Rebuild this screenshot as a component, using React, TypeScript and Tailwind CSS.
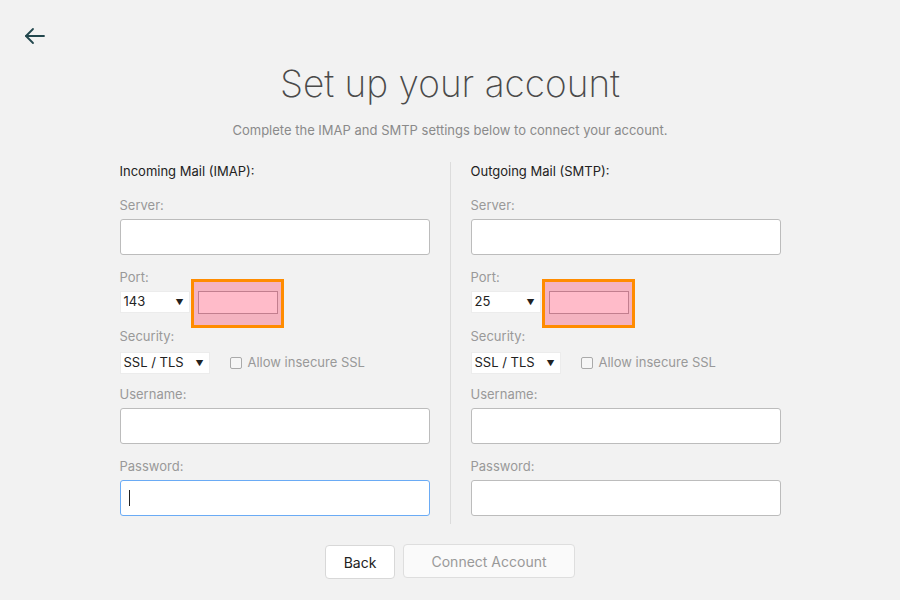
import React from 'react';

function BackArrow() {
  return (
    <svg width="22" height="18" viewBox="0 0 22 18" fill="none" stroke="#22474d" strokeWidth="1.8" strokeLinecap="round" strokeLinejoin="round">
      <path d="M2 9h18" />
      <path d="M9 2L2 9l7 7" />
    </svg>
  );
}

function Label({ children, className = '' }: { children: React.ReactNode; className?: string }) {
  return <div className={`text-[13px] leading-4 text-[#999] ${className}`}>{children}</div>;
}

function TextBox({ focused = false }: { focused?: boolean }) {
  return (
    <div
      className={`h-9 w-full rounded-[3px] bg-white border flex items-center px-2 ${
        focused ? 'border-[#6aabf5]' : 'border-[#bcbcbc]'
      }`}
    >
      {focused && <span className="w-px h-4 bg-[#222]" />}
    </div>
  );
}

function Select({ value, width }: { value: string; width: string }) {
  return (
    <div className={`${width} h-[22px] bg-white border border-[#ececec] flex items-center justify-between pl-[3px] pr-[5px] text-[13px] text-[#222]`}>
      <span>{value}</span>
      <span className="text-[8px] text-[#222]">▼</span>
    </div>
  );
}

function Column({ title, port }: { title: string; port: string }) {
  return (
    <div className="w-[310px] pb-2">
      <div className="text-[13px] leading-4 text-[#222] mt-px">{title}</div>
      <Label className="mt-[18px]">Server:</Label>
      <div className="mt-[6px]">
        <TextBox />
      </div>
      <Label className="mt-[14px]">Port:</Label>
      <div className="mt-[6px] flex items-start">
        <Select value={port} width="w-[70px]" />
        <div className="relative ml-2">
          <div className="absolute left-[-7px] top-[-12px] w-[93px] h-[49px] border-[3px] border-[#ff8c00] bg-[#f4b3c0]" />
          <div className="relative w-[80px] h-[23px] bg-[#ffbbc9] border border-[#c27e8e]" />
        </div>
      </div>
      <Label className="mt-[14px]">Security:</Label>
      <div className="mt-[8px] flex items-center">
        <Select value="SSL / TLS" width="w-[90px]" />
        <div className="ml-5 flex items-center gap-[6px]">
          <span className="w-3 h-3 rounded-[2px] border border-[#aaa] bg-[#f6f6f6]" />
          <span className="text-[13px] text-[#999]">Allow insecure SSL</span>
        </div>
      </div>
      <Label className="mt-[12px]">Username:</Label>
      <div className="mt-[6px]">
        <TextBox />
      </div>
      <Label className="mt-[14px]">Password:</Label>
      <div className="mt-[6px]">
        <TextBox focused={title.startsWith('Incoming')} />
      </div>
    </div>
  );
}

export default function App() {
  return (
    <div
      className="w-[900px] h-[600px] bg-[#f2f2f2] relative overflow-hidden"
      style={{ fontFamily: 'Inter, "Liberation Sans", sans-serif' }}
    >
      <div className="absolute left-[24px] top-[27px]">
        <BackArrow />
      </div>
      <div className="flex flex-col items-center pt-[61px]">
        <h1 className="text-[37px] leading-[46px] font-[150] text-[#4a4a4a]">Set up your account</h1>
        <p className="mt-[15px] text-[13px] leading-4 text-[#8a8a8a]">
          Complete the IMAP and SMTP settings below to connect your account.
        </p>
        <div className="mt-[24px] flex">
          <Column title="Incoming Mail (IMAP):" port="143" />
          <div className="mx-5 w-px bg-[#dcdcdc]" />
          <Column title="Outgoing Mail (SMTP):" port="25" />
        </div>
        <div className="mt-5 flex items-start gap-2">
          <button className="w-[70px] h-[34px] mt-px rounded-[4px] bg-white border border-[#d8d8d8] text-[14px] text-[#222]">
            Back
          </button>
          <button className="w-[172px] h-[34px] rounded-[4px] bg-[#fafafa] border border-[#dedede] text-[14px] text-[#999]">
            Connect Account
          </button>
        </div>
      </div>
    </div>
  );
}
